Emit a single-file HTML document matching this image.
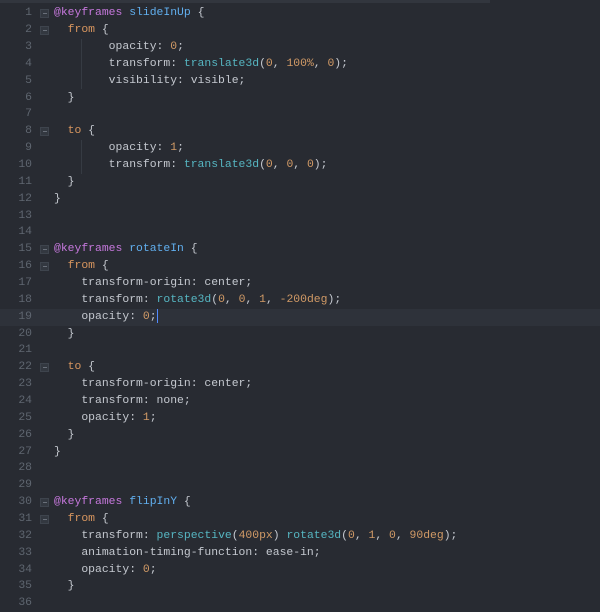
<!DOCTYPE html><html><head><style>
body{margin:0;width:600px;height:600px;overflow:hidden;background:#282b32;font-family:"Liberation Mono",monospace;font-size:11.4px;}
.top{position:absolute;left:0;top:0;width:490px;height:3px;background:#32363e}
.l{position:absolute;left:0;height:16.86px;line-height:16.86px;width:600px;white-space:pre}
.n{position:absolute;right:568px;color:#5f6670;text-align:right}
.f{position:absolute;left:40px;top:4px;width:7px;height:7px;background:#333840;border:1px solid #3e444d}
.f:after{content:"";position:absolute;left:1.5px;top:3px;width:4px;height:1px;background:#6a707a}
.g{position:absolute;left:81px;top:0;width:1px;height:100%;background:#363b43}
.c{position:absolute;left:54px;color:#c5c9d0}
.k{color:#c678dd}.b{color:#61afef}.o{color:#d19a66}.t{color:#56b6c2}.fr{color:#d8965f}
.cur{background:#2e323a}
.caret{display:inline-block;width:1.5px;height:14px;background:#528bff;vertical-align:middle}
</style></head><body><div class="top"></div>
<div id="w"></div>
<script>
var L=[
'<span class="k">@keyframes</span> <span class="b">slideInUp</span> {',
'  <span class="fr">from</span> {',
'        opacity: <span class="o">0</span>;',
'        transform: <span class="t">translate3d</span>(<span class="o">0</span>, <span class="o">100%</span>, <span class="o">0</span>);',
'        visibility: visible;',
'  }','',
'  <span class="fr">to</span> {',
'        opacity: <span class="o">1</span>;',
'        transform: <span class="t">translate3d</span>(<span class="o">0</span>, <span class="o">0</span>, <span class="o">0</span>);',
'  }','}','','',
'<span class="k">@keyframes</span> <span class="b">rotateIn</span> {',
'  <span class="fr">from</span> {',
'    transform-origin: center;',
'    transform: <span class="t">rotate3d</span>(<span class="o">0</span>, <span class="o">0</span>, <span class="o">1</span>, <span class="o">-200deg</span>);',
'    opacity: <span class="o">0</span>;<span class="caret"></span>',
'  }','',
'  <span class="fr">to</span> {',
'    transform-origin: center;',
'    transform: none;',
'    opacity: <span class="o">1</span>;',
'  }','}','','',
'<span class="k">@keyframes</span> <span class="b">flipInY</span> {',
'  <span class="fr">from</span> {',
'    transform: <span class="t">perspective</span>(<span class="o">400px</span>) <span class="t">rotate3d</span>(<span class="o">0</span>, <span class="o">1</span>, <span class="o">0</span>, <span class="o">90deg</span>);',
'    animation-timing-function: ease-in;',
'    opacity: <span class="o">0</span>;',
'  }',''];
var folds=[1,2,8,15,16,22,30,31],guides=[3,4,5,9,10],h='';
for(var i=0;i<L.length;i++){var n=i+1;
h+='<div class="l'+(n==19?' cur':'')+'" style="top:'+(5.2+i*16.86)+'px">'+(guides.indexOf(n)>=0?'<span class="g"></span>':'')+'<span class="n">'+n+'</span>'+(folds.indexOf(n)>=0?'<span class="f"></span>':'')+'<span class="c">'+L[i]+'</span></div>';}
document.getElementById('w').innerHTML=h;
</script></body></html>
